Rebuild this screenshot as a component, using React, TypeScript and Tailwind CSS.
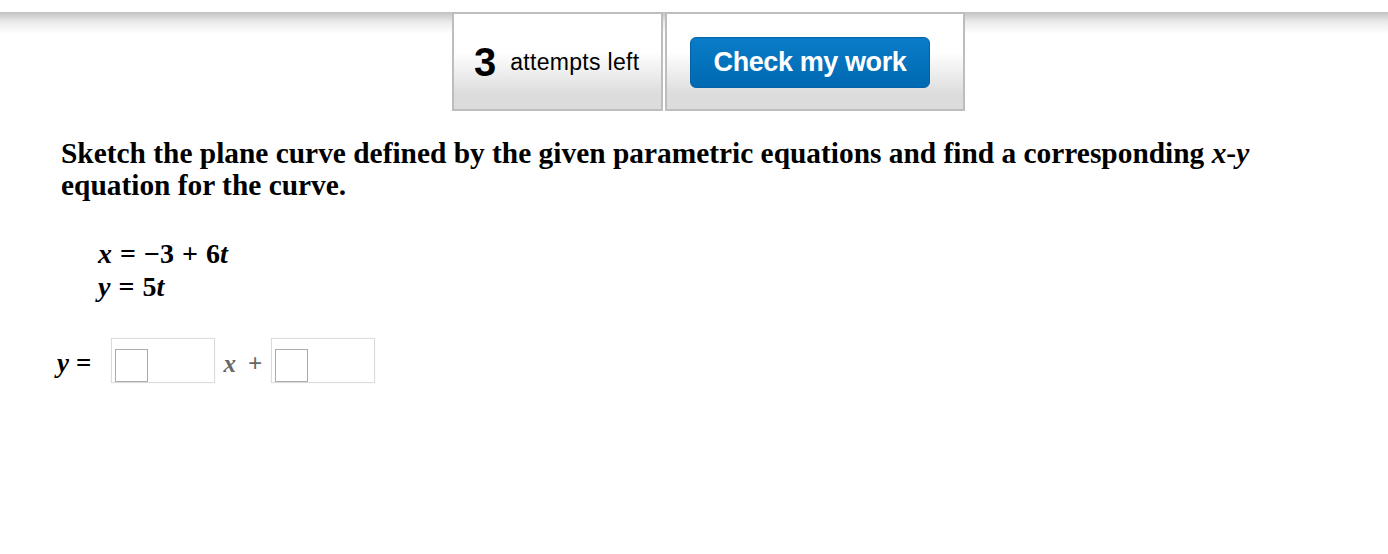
import React from "react";

const serif = { fontFamily: '"Liberation Serif", "Times New Roman", serif' };

function AnswerBox() {
  return (
    <div className="relative h-[45px] w-[104px] border border-[#dcdcdc] shadow-[0_0_1px_#e6e6e6]">
      <div className="absolute bottom-0 left-[3px] h-[33px] w-[33px] border border-[#ababab] bg-white" />
    </div>
  );
}

function Op({ children }: { children: React.ReactNode }) {
  return <span className="mx-[8px]">{children}</span>;
}

export default function App() {
  return (
    <div className="min-h-[554px] bg-white text-black">
      {/* Toolbar */}
      <div className="mt-[12px] bg-[linear-gradient(to_bottom,#c2c2c2,#ebebeb_10px,#fff_22px)] pl-[452px]">
        <div className="flex gap-[2px]" style={{ fontFamily: '"Liberation Sans", Arial, sans-serif' }}>
          <div className="flex h-[99px] w-[211px] items-center border-2 border-[#bdbdbd] bg-[linear-gradient(to_bottom,#fff_40%,#dcdcdc_85%)] pl-[20px]">
            <span className="text-[40px] font-bold leading-none">3</span>
            <span className="ml-[14px] mt-[2px] text-[23px] tracking-[0.3px]">attempts left</span>
          </div>
          <div className="h-[99px] w-[300px] border-2 border-[#bdbdbd] bg-[linear-gradient(to_bottom,#fff_40%,#dcdcdc_85%)] pl-[23px] pt-[23px]">
            <button className="flex h-[51px] w-[240px] items-center justify-center rounded-[6px] border border-[#0462a6] bg-[linear-gradient(to_bottom,#0a7cc8,#0069b1)] text-[27px] font-bold tracking-[-0.4px] text-white">
              Check my work
            </button>
          </div>
        </div>
      </div>

      {/* Question */}
      <div className="px-[61px] pt-[26px]" style={serif}>
        <p className="max-w-[1200px] text-[29.4px] font-bold leading-[32px]">
          Sketch the plane curve defined by the given parametric equations and find a corresponding{" "}
          <i>x</i>-<i>y</i> equation for the curve.
        </p>

        <div className="mt-[36px] pl-[37px] text-[28px] font-bold leading-[33px]">
          <div>
            <i>x</i>
            <Op>=</Op>−3<Op>+</Op>6<i>t</i>
          </div>
          <div>
            <i>y</i>
            <Op>=</Op>5<i>t</i>
          </div>
        </div>

        <div className="-ml-[4px] mt-[35px] flex items-end">
          <span className="mb-[6px] text-[27px] font-bold leading-none">
            <i>y</i>
            <span className="ml-[7px]">=</span>
          </span>
          <div className="ml-[20px]">
            <AnswerBox />
          </div>
          <span className="mb-[7px] ml-[8px] mr-[9px] text-[25px] font-bold leading-none text-[#666]">
            <i>x</i>
            <span className="ml-[12px]">+</span>
          </span>
          <AnswerBox />
        </div>
      </div>
    </div>
  );
}
